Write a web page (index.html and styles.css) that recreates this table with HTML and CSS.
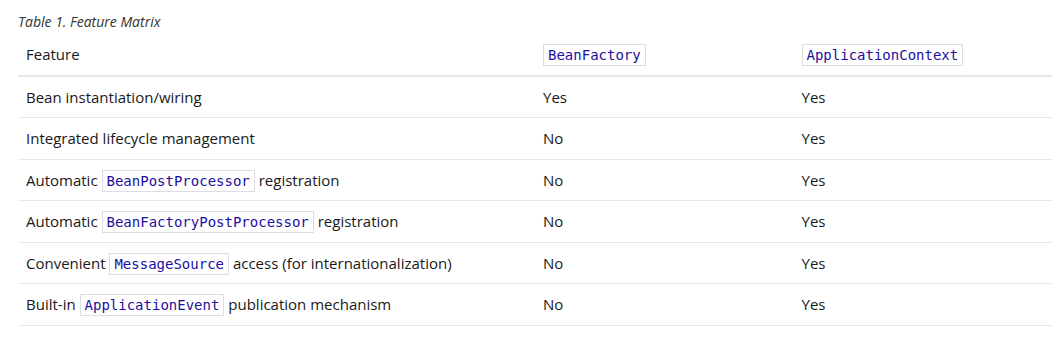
FILE: index.html
```html
<!DOCTYPE html>
<html>
<head>
<meta charset="utf-8">
<link rel="stylesheet" href="styles.css">
</head>
<body>
<div class="wrap">
<table class="matrix">
<caption class="title">Table 1. Feature Matrix</caption>
<colgroup><col class="c1"><col class="c2"><col class="c3"></colgroup>
<thead>
<tr><th>Feature</th><th><code>BeanFactory</code></th><th><code>ApplicationContext</code></th></tr>
</thead>
<tbody>
<tr><td>Bean instantiation/wiring</td><td>Yes</td><td>Yes</td></tr>
<tr><td>Integrated lifecycle management</td><td>No</td><td>Yes</td></tr>
<tr><td>Automatic <code>BeanPostProcessor</code> registration</td><td>No</td><td>Yes</td></tr>
<tr><td>Automatic <code>BeanFactoryPostProcessor</code> registration</td><td>No</td><td>Yes</td></tr>
<tr><td>Convenient <code>MessageSource</code> access (for internationalization)</td><td>No</td><td>Yes</td></tr>
<tr><td>Built-in <code>ApplicationEvent</code> publication mechanism</td><td>No</td><td>Yes</td></tr>
</tbody>
</table>
</div>
</body>
</html>
```
FILE: styles.css
```css
html, body { margin: 0; padding: 0; background: #fff; }
body { font-family: "Open Sans", "Noto Sans", sans-serif; color: #191919; }
.wrap { padding: 10px 10px 0 18px; }
.matrix { width: 1034px; border-collapse: collapse; table-layout: fixed; font-size: 15px; }
.title { caption-side: top; text-align: left; font-style: italic; font-size: 14px; line-height: 22px; color: #333; padding: 1px 0 1px 0; }
.c1 { width: 50%; }
.c2 { width: 25%; }
.c3 { width: 25%; }
th { font-weight: normal; text-align: left; padding: 8px 8px 8px; line-height: 24.5px; border-bottom: 2px solid #e6e9ed; }
td { padding: 8px 8px 8px; line-height: 24.6px; border-bottom: 1px solid #e8e8e8; }
code { font-family: "DejaVu Sans Mono", monospace; font-size: 14px; line-height: 1; color: #1d0fa0; border: 1px solid #dcdde0; padding: 2px 4px; background: #fff; }
```
